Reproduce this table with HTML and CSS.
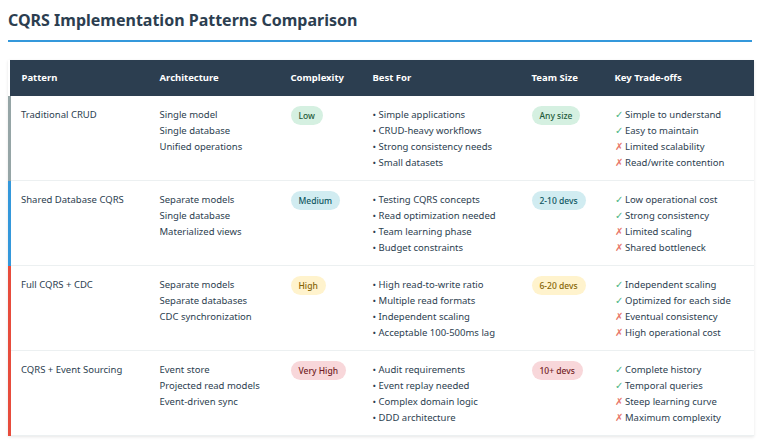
FILE: index.html
```html
<!DOCTYPE html>
<html>
<head>
<meta charset="utf-8">
<link rel="stylesheet" href="styles.css">
</head>
<body>
<div class="page">
  <h1 class="title">CQRS Implementation Patterns Comparison</h1>
  <table class="grid">
    <colgroup>
      <col class="c1"><col class="c2"><col class="c3"><col class="c4"><col class="c5"><col class="c6">
    </colgroup>
    <thead>
      <tr><th>Pattern</th><th>Architecture</th><th>Complexity</th><th>Best For</th><th>Team Size</th><th>Key Trade-offs</th></tr>
    </thead>
    <tbody>
      <tr class="row gray">
        <td>Traditional CRUD</td>
        <td>Single model<br>Single database<br>Unified operations</td>
        <td><span class="badge low">Low</span></td>
        <td>• Simple applications<br>• CRUD-heavy workflows<br>• Strong consistency needs<br>• Small datasets</td>
        <td><span class="badge low">Any size</span></td>
        <td><span class="ok">✓</span> Simple to understand<br><span class="ok">✓</span> Easy to maintain<br><span class="no">✗</span> Limited scalability<br><span class="no">✗</span> Read/write contention</td>
      </tr>
      <tr class="row blue">
        <td>Shared Database CQRS</td>
        <td>Separate models<br>Single database<br>Materialized views</td>
        <td><span class="badge med">Medium</span></td>
        <td>• Testing CQRS concepts<br>• Read optimization needed<br>• Team learning phase<br>• Budget constraints</td>
        <td><span class="badge med">2-10 devs</span></td>
        <td><span class="ok">✓</span> Low operational cost<br><span class="ok">✓</span> Strong consistency<br><span class="no">✗</span> Limited scaling<br><span class="no">✗</span> Shared bottleneck</td>
      </tr>
      <tr class="row red">
        <td>Full CQRS + CDC</td>
        <td>Separate models<br>Separate databases<br>CDC synchronization</td>
        <td><span class="badge high">High</span></td>
        <td>• High read-to-write ratio<br>• Multiple read formats<br>• Independent scaling<br>• Acceptable 100-500ms lag</td>
        <td><span class="badge high">6-20 devs</span></td>
        <td><span class="ok">✓</span> Independent scaling<br><span class="ok">✓</span> Optimized for each side<br><span class="no">✗</span> Eventual consistency<br><span class="no">✗</span> High operational cost</td>
      </tr>
      <tr class="row red">
        <td>CQRS + Event Sourcing</td>
        <td>Event store<br>Projected read models<br>Event-driven sync</td>
        <td><span class="badge vhigh">Very High</span></td>
        <td>• Audit requirements<br>• Event replay needed<br>• Complex domain logic<br>• DDD architecture</td>
        <td><span class="badge vhigh">10+ devs</span></td>
        <td><span class="ok">✓</span> Complete history<br><span class="ok">✓</span> Temporal queries<br><span class="no">✗</span> Steep learning curve<br><span class="no">✗</span> Maximum complexity</td>
      </tr>
    </tbody>
  </table>
</div>
</body>
</html>
```

FILE: styles.css
```css
html, body {
  margin: 0;
  padding: 0;
  background: #ffffff;
}
body {
  font-family: "Noto Sans", "Open Sans", sans-serif;
  color: #2c3e50;
}
.page {
  width: 744px;
  padding: 8px;
}
.title {
  margin: 0 0 18px 0;
  font-size: 16px;
  line-height: 24px;
  font-weight: 700;
  color: #2c3e50;
  padding-bottom: 8px;
  border-bottom: 2px solid #3498db;
}
.grid {
  width: 744px;
  table-layout: fixed;
  border-collapse: collapse;
  font-size: 9.5px;
  line-height: 16px;
  box-shadow: 0 1px 3px rgba(0,0,0,0.1);
}
.c1 { width: 138px; }
.c2 { width: 131px; }
.c3 { width: 82px; }
.c4 { width: 159px; }
.c5 { width: 83px; }
.c6 { width: 151px; }
th {
  background: #2c3e50;
  color: #ffffff;
  font-weight: 700;
  text-align: left;
  padding: 10px 12px;
  height: 16px;
}
td {
  vertical-align: top;
  padding: 11px 12px 9px 12px;
  color: #2c3e50;
  border-bottom: 1px solid #ecf0f1;
}
.row td:first-child { padding-left: 10px; }
.row.gray td:first-child { border-left: 3px solid #95a5a6; }
.row.blue td:first-child { border-left: 3px solid #3498db; }
.row.red td:first-child { border-left: 3px solid #e74c3c; }
.badge {
  display: inline-block;
  font-size: 8.5px;
  line-height: 13px;
  padding: 3px 8px;
  border-radius: 10px;
  font-weight: 500;
  margin-top: -1px;
}
.low { background: #d5f0e1; color: #1e5a3a; }
.med { background: #d1ecf1; color: #0c5460; }
.high { background: #fff3cd; color: #856404; }
.vhigh { background: #f8d7da; color: #721c24; }
.ok { color: #4cb582; }
.no { color: #e8776a; }
```
